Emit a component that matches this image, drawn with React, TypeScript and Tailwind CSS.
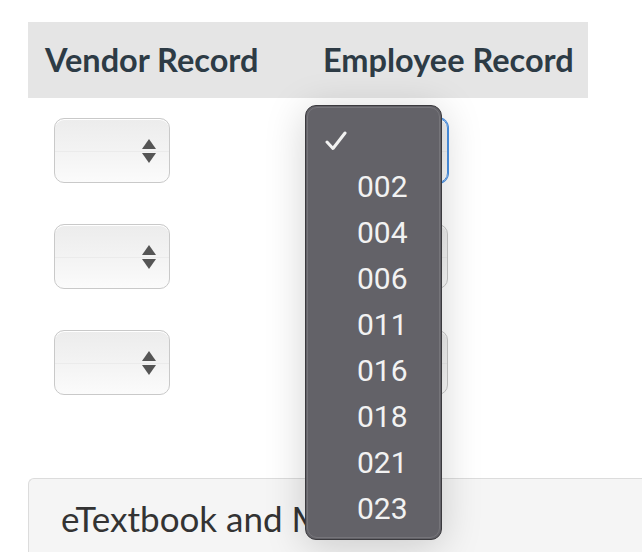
import React from "react";

const options = ["002", "004", "006", "011", "016", "018", "021", "023"];

function FakeSelect({ focused = false }: { focused?: boolean }) {
  return (
    <div
      className={`relative w-[116px] h-[65px] rounded-[10px] border bg-gradient-to-b from-[#ececec] via-[#f3f3f3] to-[#fbfbfb] shadow-[inset_0_1px_0_#ffffff] ${
        focused ? "border-[#4a90e2] ring-1 ring-[#4a90e2]" : "border-[#c9c9c9]"
      }`}
    >
      <div className="absolute inset-x-0 top-1/2 h-px bg-[#ebebeb]" />
      <svg className="absolute right-[13px] top-[20px]" width="14" height="26" viewBox="0 0 14 26">
        <polygon points="7,0 14,10 0,10" fill="#555" />
        <polygon points="0,14 14,14 7,24" fill="#555" />
      </svg>
    </div>
  );
}

export default function App() {
  return (
    <div className="relative w-[642px] h-[552px] overflow-hidden bg-white font-['Lato',sans-serif]">
      <div className="pt-[22px] pl-[28px]">
        {/* table header */}
        <div className="flex w-[560px] h-[76px] items-center bg-[#e5e5e5] text-[#2d3b45] font-bold text-[32.5px]">
          <div className="w-[278px] pl-[17px]">Vendor Record</div>
          <div className="pl-[17px]">Employee Record</div>
        </div>

        {/* rows */}
        {[0, 1, 2].map((row) => (
          <div key={row} className="flex h-[106px] items-start pt-[20px]">
            <div className="w-[278px] pl-[26px]">
              <FakeSelect />
            </div>
            <div className="pl-[26px]">
              <FakeSelect focused={row === 0} />
            </div>
          </div>
        ))}

        {/* collapsed panel */}
        <div className="mt-[62px] h-[80px] rounded-tl-[6px] border-t border-l border-[#dcdcdc] bg-[#f5f5f5] pl-[32px] pt-[22px] text-[35px] text-[#333] leading-none">
          eTextbook and Materials
        </div>
      </div>

      {/* open select popup */}
      <div className="absolute left-[305px] top-[105px] w-[137px] h-[435px] pt-[12px] rounded-[11px] border border-[#3b3a3e] bg-[#636268] shadow-[0_6px_40px_rgba(0,0,0,0.18)] font-['Roboto',sans-serif] text-[#f2f2f2]">
        <div className="absolute inset-[1px] rounded-[10px] border border-[#76757a] pointer-events-none" />
        <div className="flex h-[46px] items-center pl-[19px]">
          <svg width="22" height="20" viewBox="0 0 22 20">
            <path d="M2 11 L8 17.5 L20 2" fill="none" stroke="#f2f2f2" strokeWidth="3" strokeLinecap="round" strokeLinejoin="round" />
          </svg>
        </div>
        {options.map((o) => (
          <div key={o} className="flex h-[46px] items-center pl-[51px] text-[30px] leading-none">
            {o}
          </div>
        ))}
      </div>
    </div>
  );
}
